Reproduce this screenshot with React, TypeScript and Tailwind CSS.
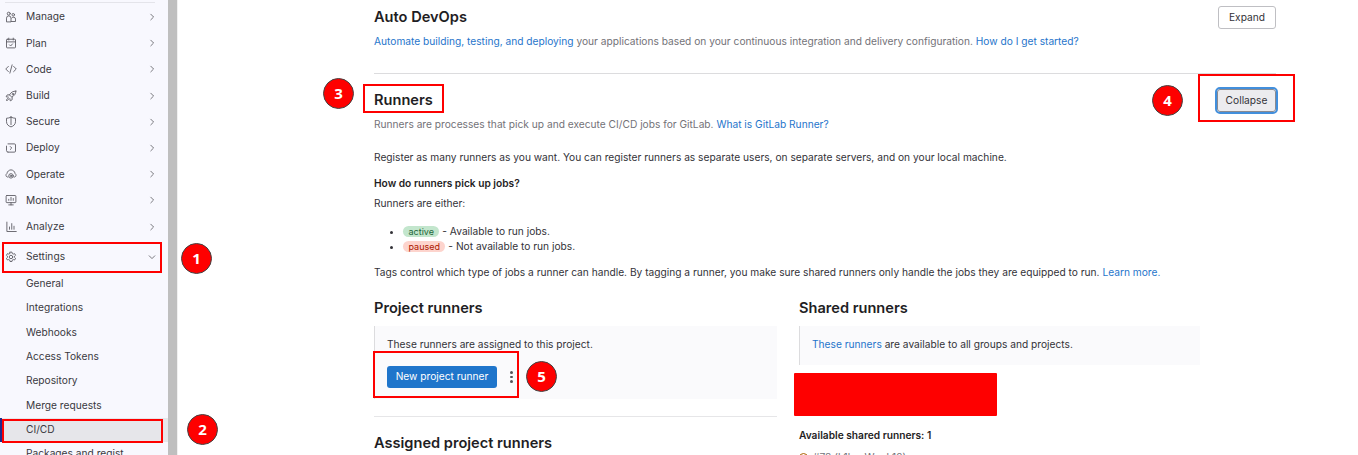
import React from 'react';

type IconProps = { className?: string };

const base = {
  width: 12,
  height: 12,
  viewBox: '0 0 16 16',
  fill: 'none',
  stroke: 'currentColor',
  strokeWidth: 1.2,
  strokeLinecap: 'round' as const,
  strokeLinejoin: 'round' as const,
};

const ManageIcon = () => (
  <svg {...base}>
    <circle cx="5" cy="3.5" r="2" />
    <circle cx="11" cy="5" r="1.7" />
    <path d="M2 14V9.5a3 3 0 0 1 6 0V14z" />
    <path d="M8.5 14h5.5v-3.2a2.7 2.7 0 0 0-5-1.4" />
  </svg>
);
const PlanIcon = () => (
  <svg {...base}>
    <rect x="2" y="3" width="12" height="11.5" rx="1" />
    <path d="M2 6.5h12M5 1.5V4M11 1.5V4M6 10.5l1.5 1.5 2.5-2.8" />
  </svg>
);
const CodeIcon = () => (
  <svg {...base}>
    <path d="M4.5 4.5 1 8l3.5 3.5M11.5 4.5 15 8l-3.5 3.5M9.5 2.5l-3 11" />
  </svg>
);
const BuildIcon = () => (
  <svg {...base}>
    <path d="M14.5 1.500c-4 0-6.500 1.500-8.500 5l3 3c3.500-2 5.500-4.500 5.500-8z" />
    <path d="M6 6.500H3L1.500 9l3 .5M9.500 10v3L7 14.500 6.500 11.500M4 11c-1.500.5-2 2-2 3 1 0 2.500-.5 3-2" />
    <circle cx="10.500" cy="5.500" r="1" />
  </svg>
);
const SecureIcon = () => (
  <svg {...base}>
    <path d="M8 1.500c2 1 4 1.500 6 1.500v4.500c0 3.500-2.500 6-6 7-3.500-1-6-3.500-6-7V3c2 0 4-.5 6-1.500z" />
    <path d="M8 1.500v10" />
  </svg>
);
const DeployIcon = () => (
  <svg {...base}>
    <path d="M4 2.500h8.500a1.500 1.500 0 0 1 1.500 1.500v8a1.500 1.500 0 0 1-1.500 1.500H4" />
    <path d="M2 5.500v6a2 2 0 0 0 2 2M7 6l2 2-2 2" />
  </svg>
);
const OperateIcon = () => (
  <svg {...base}>
    <path d="M4 12H3a2.500 2.500 0 0 1-.5-4.500C3 4.500 5.500 2.500 8 2.500s5 2 5.500 5A2.500 2.500 0 0 1 13 12h-1" />
    <circle cx="8" cy="10.500" r="3" />
    <circle cx="8" cy="10.500" r="1" />
  </svg>
);
const MonitorIcon = () => (
  <svg {...base}>
    <rect x="1.500" y="2" width="13" height="9.500" rx="1" />
    <path d="M5 14.500h6M8 11.500v3M5 8.500V7M8 8.500V4.500M11 8.500V6" />
  </svg>
);
const AnalyzeIcon = () => (
  <svg {...base}>
    <path d="M2.500 1.500v12.500H15M6 11V8M9 11V3.500M12 11V7" />
  </svg>
);
const SettingsIcon = () => (
  <svg {...base}>
    <circle cx="8" cy="8" r="2.300" />
    <path d="M6.700 1.500h2.600l.4 1.900 1.300.7 1.800-.6 1.300 2.200-1.400 1.300v1.500l1.400 1.300-1.300 2.200-1.800-.6-1.300.7-.4 1.900H6.700l-.4-1.900-1.300-.7-1.800.6-1.300-2.200 1.400-1.300V7L1.900 5.700l1.300-2.200 1.800.6 1.300-.7z" />
  </svg>
);
const Chevron = ({ className = '' }: IconProps) => (
  <svg width="8" height="8" viewBox="0 0 10 10" fill="none" stroke="currentColor" strokeWidth="1.200" strokeLinecap="round" strokeLinejoin="round" className={className}>
    <path d="M3.500 1.500 7 5 3.500 8.500" />
  </svg>
);
const ChevronDown = ({ className = '' }: IconProps) => (
  <svg width="8" height="8" viewBox="0 0 10 10" fill="none" stroke="currentColor" strokeWidth="1.200" strokeLinecap="round" strokeLinejoin="round" className={className}>
    <path d="M1.500 3.500 5 7l3.500-3.500" />
  </svg>
);

const navItems: { label: string; icon: React.ReactNode }[] = [
  { label: 'Manage', icon: <ManageIcon /> },
  { label: 'Plan', icon: <PlanIcon /> },
  { label: 'Code', icon: <CodeIcon /> },
  { label: 'Build', icon: <BuildIcon /> },
  { label: 'Secure', icon: <SecureIcon /> },
  { label: 'Deploy', icon: <DeployIcon /> },
  { label: 'Operate', icon: <OperateIcon /> },
  { label: 'Monitor', icon: <MonitorIcon /> },
  { label: 'Analyze', icon: <AnalyzeIcon /> },
];

const subItems = ['General', 'Integrations', 'Webhooks', 'Access Tokens', 'Repository', 'Merge requests', 'CI/CD', 'Packages and regist'];

function Marker({ n, className }: { n: number; className: string }) {
  return (
    <div className={`absolute flex h-[31px] w-[31px] items-center justify-center rounded-full border-[1.500px] border-[#444] bg-[#fe0000] text-[15px] font-bold text-white font-['Open_Sans',sans-serif] ${className}`}>
      {n}
    </div>
  );
}

function Sidebar() {
  return (
    <aside className="h-[455px] w-[168px] shrink-0 overflow-hidden bg-[#f8f8fe] text-[10.200px] text-[#3a383f]">
      <div className="mx-[5px] mt-[2px] w-[150px] border-t border-[#e4e4ea]" />
      <div className="flex flex-col pt-[1px]">
        {navItems.map((item) => (
          <div key={item.label} className="flex h-[26.2px] items-center pl-[5px] pr-[12px]">
            <span className="flex w-[20px] shrink-0 text-[#5f5e65]">{item.icon}</span>
            <span className="ml-[1px] flex-1">{item.label}</span>
            <Chevron className="text-[#737278]" />
          </div>
        ))}
      </div>
      <div className="mt-[4px] flex h-[26px] items-center pl-[5px] pr-[12px]">
        <span className="flex w-[20px] shrink-0 text-[#5f5e65]"><SettingsIcon /></span>
        <span className="ml-[1px] flex-1">Settings</span>
        <ChevronDown className="text-[#737278]" />
      </div>
      <div className="flex flex-col pt-[1.500px]">
        {subItems.map((label) => (
          <div
            key={label}
            className={`flex h-[24.4px] shrink-0 items-center ${label === 'CI/CD' ? 'ml-[2px] bg-[#e6e6ea] pl-[24px] shadow-[-2px_0_0_#1f2a8c]' : 'pl-[26px]'}`}
          >
            {label}
          </div>
        ))}
      </div>
    </aside>
  );
}

function Badge({ tone, children }: { tone: 'green' | 'red'; children: React.ReactNode }) {
  return (
    <span className={`inline-block rounded-full px-[5.500px] text-[9px] leading-[11px] ${tone === 'green' ? 'bg-[#c3e6cd] text-[#24663b]' : 'bg-[#fdd4cd] text-[#ae1800]'}`}>
      {children}
    </span>
  );
}

function Link({ children }: { children: React.ReactNode }) {
  return <span className="text-[#1f75cb]">{children}</span>;
}

function Main() {
  return (
    <main className="min-w-0 flex-1 pl-[196px] pr-[82px] text-[10.200px] text-[#333238]">
      <section className="h-[74px] border-b border-[#dcdcde]">
        <div className="flex items-start justify-between pt-[6px]">
          <h2 className="text-[14.600px] font-semibold leading-[22px] text-[#1f1e24]">Auto DevOps</h2>
          <button className="h-[23px] w-[58px] rounded-[3px] border border-[#bfbfc3] bg-white text-[10.200px] text-[#333238]">Expand</button>
        </div>
        <p className="mt-[5px] text-[#737278]">
          <Link>Automate building, testing, and deploying</Link> your applications based on your continuous integration and delivery configuration. <Link>How do I get started?</Link>
        </p>
      </section>

      <section>
        <div className="flex items-start justify-between pt-[15px]">
          <h2 className="text-[14.600px] font-semibold leading-[22px] text-[#1f1e24]">Runners</h2>
          <button className="h-[23px] w-[59px] rounded-[3px] border border-[#8a8a90] bg-[#ececef] text-[10.200px] text-[#333238] outline-2 outline-[#428fdc]">Collapse</button>
        </div>
        <p className="mt-[4px] leading-[16px] text-[#737278]">
          Runners are processes that pick up and execute CI/CD jobs for GitLab. <Link>What is GitLab Runner?</Link>
        </p>
        <p className="mt-[17px] leading-[16px]">Register as many runners as you want. You can register runners as separate users, on separate servers, and on your local machine.</p>
        <p className="mt-[10px] font-semibold leading-[16px] text-[#1f1e24]">How do runners pick up jobs?</p>
        <p className="mt-[4px] leading-[16px]">Runners are either:</p>
        <ul className="mt-[13px] list-disc pl-[29px] leading-[15px]">
          <li><Badge tone="green">active</Badge> - Available to run jobs.</li>
          <li><Badge tone="red">paused</Badge> - Not available to run jobs.</li>
        </ul>
        <p className="mt-[10px] leading-[16px]">
          Tags control which type of jobs a runner can handle. By tagging a runner, you make sure shared runners only handle the jobs they are equipped to run. <Link>Learn more.</Link>
        </p>

        <div className="mt-[17px] grid grid-cols-[403px_401px] gap-x-[22px]">
          <div>
            <h3 className="text-[14.600px] font-semibold leading-[22px] text-[#1f1e24]">Project runners</h3>
            <div className="mt-[7px] h-[73px] border-l border-[#dcdcde] bg-[#fafafc] pl-[12px] pt-[10px]">
              <p className="leading-[16px]">These runners are assigned to this project.</p>
              <div className="mt-[14px] flex items-center">
                <button className="h-[22px] w-[110px] rounded-[3px] bg-[#1f75cb] text-[10.200px] text-white">New project runner</button>
                <span className="ml-[13px] flex flex-col gap-[2px]">
                  <i className="h-[2.500px] w-[2.500px] rounded-full bg-[#55545a]" />
                  <i className="h-[2.500px] w-[2.500px] rounded-full bg-[#55545a]" />
                  <i className="h-[2.500px] w-[2.500px] rounded-full bg-[#55545a]" />
                </span>
              </div>
            </div>
            <div className="mt-[17px] border-t border-[#e6e6e8]" />
            <h3 className="mt-[15px] text-[14.600px] font-semibold leading-[22px] text-[#1f1e24]">Assigned project runners</h3>
          </div>
          <div>
            <h3 className="text-[14.600px] font-semibold leading-[22px] text-[#1f1e24]">Shared runners</h3>
            <div className="mt-[7px] h-[39px] border-l border-[#dcdcde] bg-[#fafafc] pl-[12px] pt-[10px]">
              <p className="leading-[16px]"><Link>These runners</Link> are available to all groups and projects.</p>
            </div>
            <div className="ml-[-5px] mt-[8px] h-[43px] w-[203px] rounded-[1px] bg-[#fe0000]" />
            <p className="mt-[11px] font-semibold leading-[16px] text-[#1f1e24]">Available shared runners: 1</p>
            <div className="mt-[6px] flex items-center gap-[5px] leading-[16px]">
              <span className="h-[9px] w-[9px] rounded-full border border-[#ab6100]" />
              <span className="text-[#737278]">#78 (k1kenWqgh12)</span>
            </div>
          </div>
        </div>
      </section>
    </main>
  );
}

export default function App() {
  return (
    <div className="relative flex h-[455px] w-[1358px] overflow-hidden bg-white font-['Inter',sans-serif]">
      <Sidebar />
      <div className="h-[455px] w-[9px] shrink-0 bg-[#bfbfbf]" />
      <div className="h-[455px] w-[1px] shrink-0 bg-[#f0f0f0]" />
      <Main />

      {/* red annotation boxes and numbered markers */}
      <div className="absolute left-[2px] top-[242px] h-[31px] w-[160px] border-[2px] border-[#fe0000]" />
      <div className="absolute left-[2px] top-[419px] h-[24px] w-[161px] border-[2px] border-[#fe0000]" />
      <div className="absolute left-[363px] top-[84px] h-[29px] w-[81px] border-[2px] border-[#fe0000]" />
      <div className="absolute left-[1198px] top-[74px] h-[48px] w-[97px] border-[2px] border-[#fe0000]" />
      <div className="absolute left-[373px] top-[351px] h-[47px] w-[146px] border-[2px] border-[#fe0000]" />
      <Marker n={1} className="left-[181px] top-[243px]" />
      <Marker n={2} className="left-[187px] top-[414px]" />
      <Marker n={3} className="left-[323px] top-[78px]" />
      <Marker n={4} className="left-[1152px] top-[85px]" />
      <Marker n={5} className="left-[526px] top-[361px]" />
    </div>
  );
}
